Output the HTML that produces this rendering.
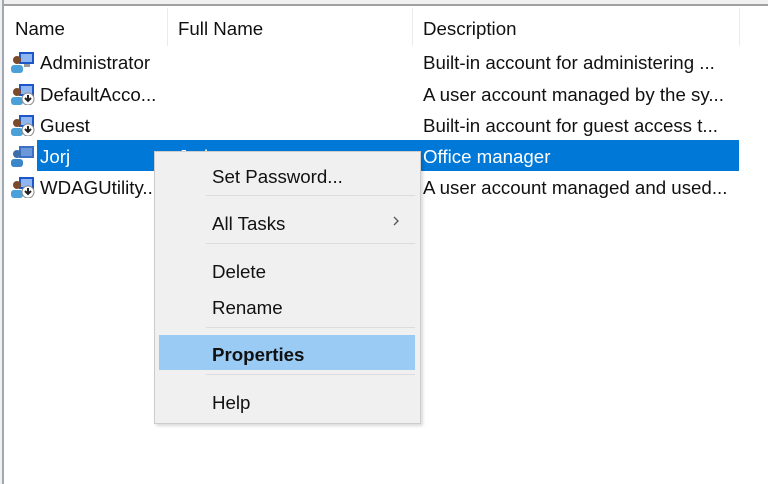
<!DOCTYPE html>
<html><head><style>
body{margin:0;width:768px;height:484px;background:#fff;position:relative;overflow:hidden;font-family:"Liberation Sans",sans-serif;font-size:18.7px;color:#111}
.a{position:absolute;white-space:nowrap}
.top{left:0;top:0;width:768px;height:4px;background:#f0f0f0;border-bottom:2px solid #a0a0a0}
.left{left:0;top:0;width:2px;height:484px;background:#f0f0f0;border-right:2px solid #a0a8b4}
.div{width:1px;height:38px;top:8px;background:#eaeaea}
.ic{position:absolute;left:10px;width:25px;height:22px}
.sep{position:absolute;left:206px;width:209px;height:1px;background:#dcdcdc}
</style></head><body>
<div class="a top"></div><div class="a left"></div>
<div class="a div" style="left:167px"></div><div class="a div" style="left:412px"></div><div class="a div" style="left:739px"></div>
<div class="a" style="left:15px;top:18px">Name</div>
<div class="a" style="left:178px;top:18px">Full Name</div>
<div class="a" style="left:423px;top:18px">Description</div>
<div class="a" style="left:37px;top:140px;width:702px;height:31px;background:#0078d7"></div>

<svg class="ic" style="top:51px" viewBox="0 0 25 22"><rect x="9" y="1" width="15" height="12" fill="#1d56c8"/><rect x="11" y="3" width="11" height="8" fill="#8fb6f0"/><rect x="14" y="13" width="6" height="3" fill="#999"/><circle cx="7" cy="9" r="4" fill="#7a4a2a"/><rect x="1" y="14" width="12" height="8" rx="3" fill="#4aa0d8"/></svg>
<svg class="ic" style="top:83px" viewBox="0 0 25 22"><rect x="9" y="1" width="15" height="12" fill="#1d56c8"/><rect x="11" y="3" width="11" height="8" fill="#8fb6f0"/><circle cx="7" cy="9" r="4" fill="#7a4a2a"/><rect x="1" y="14" width="12" height="8" rx="3" fill="#4aa0d8"/><circle cx="18" cy="16" r="6" fill="#fff" stroke="#888"/><path d="M18 12v6M15 15l3 3 3-3" stroke="#222" stroke-width="2" fill="none"/></svg>
<svg class="ic" style="top:114px" viewBox="0 0 25 22"><rect x="9" y="1" width="15" height="12" fill="#1d56c8"/><rect x="11" y="3" width="11" height="8" fill="#8fb6f0"/><circle cx="7" cy="9" r="4" fill="#7a4a2a"/><rect x="1" y="14" width="12" height="8" rx="3" fill="#4aa0d8"/><circle cx="18" cy="16" r="6" fill="#fff" stroke="#888"/><path d="M18 12v6M15 15l3 3 3-3" stroke="#222" stroke-width="2" fill="none"/></svg>
<svg class="ic" style="top:145px" viewBox="0 0 25 22"><rect x="9" y="1" width="15" height="12" fill="#3a70c8"/><rect x="11" y="3" width="11" height="8" fill="#6a98d8"/><circle cx="7" cy="9" r="4" fill="#3b6ea8"/><rect x="1" y="14" width="12" height="8" rx="3" fill="#3a86c8"/></svg>
<svg class="ic" style="top:176px" viewBox="0 0 25 22"><rect x="9" y="1" width="15" height="12" fill="#1d56c8"/><rect x="11" y="3" width="11" height="8" fill="#8fb6f0"/><circle cx="7" cy="9" r="4" fill="#7a4a2a"/><rect x="1" y="14" width="12" height="8" rx="3" fill="#4aa0d8"/><circle cx="18" cy="16" r="6" fill="#fff" stroke="#888"/><path d="M18 12v6M15 15l3 3 3-3" stroke="#222" stroke-width="2" fill="none"/></svg>

<div class="a" style="left:40px;top:52px">Administrator</div>
<div class="a" style="left:40px;top:84px">DefaultAcco...</div>
<div class="a" style="left:40px;top:115px">Guest</div>
<div class="a" style="left:40px;top:146px;color:#fff">Jorj</div>
<div class="a" style="left:178px;top:146px;color:#fff">Jorj</div>
<div class="a" style="left:40px;top:177px">WDAGUtility...</div>
<div class="a" style="left:423px;top:52px">Built-in account for administering ...</div>
<div class="a" style="left:423px;top:84px">A user account managed by the sy...</div>
<div class="a" style="left:423px;top:115px">Built-in account for guest access t...</div>
<div class="a" style="left:423px;top:146px;color:#fff">Office manager</div>
<div class="a" style="left:423px;top:177px">A user account managed and used...</div>

<div class="a" style="left:154px;top:151px;width:265px;height:271px;background:#f0f0f0;border:1px solid #ccc;box-shadow:2px 2px 3px rgba(0,0,0,.15)"></div>
<div class="a" style="left:159px;top:335px;width:256px;height:35px;background:#99cbf5"></div>
<div class="sep" style="top:195px"></div><div class="sep" style="top:243px"></div><div class="sep" style="top:327px"></div><div class="sep" style="top:374px"></div>
<div class="a" style="left:212px;top:166px">Set Password...</div>
<div class="a" style="left:212px;top:213px">All Tasks</div>
<svg class="a" style="left:392px;top:215px" width="8" height="12" viewBox="0 0 8 12"><path d="M2 2l4 4-4 4" stroke="#555" stroke-width="1.3" fill="none"/></svg>
<div class="a" style="left:212px;top:261px">Delete</div>
<div class="a" style="left:212px;top:297px">Rename</div>
<div class="a" style="left:212px;top:344px;font-weight:bold">Properties</div>
<div class="a" style="left:212px;top:392px">Help</div>
</body></html>
